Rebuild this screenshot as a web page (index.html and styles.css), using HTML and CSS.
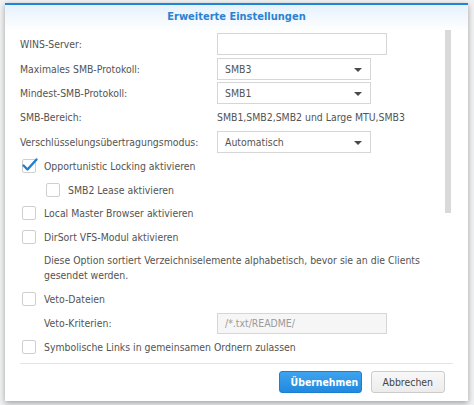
FILE: index.html
```html
<!DOCTYPE html>
<html lang="de">
<head>
<meta charset="utf-8">
<title>Erweiterte Einstellungen</title>
<link rel="stylesheet" href="styles.css">
</head>
<body>
<div class="page">
  <div class="dialog">
    <div class="header">Erweiterte Einstellungen</div>
    <div class="body">
      <div class="row first">
        <span class="label">WINS-Server:</span>
        <span class="input"></span>
      </div>
      <div class="row">
        <span class="label">Maximales SMB-Protokoll:</span>
        <span class="select">SMB3<i class="arrow"></i></span>
      </div>
      <div class="row">
        <span class="label">Mindest-SMB-Protokoll:</span>
        <span class="select">SMB1<i class="arrow"></i></span>
      </div>
      <div class="row">
        <span class="label">SMB-Bereich:</span>
        <span class="value">SMB1,SMB2,SMB2 und Large MTU,SMB3</span>
      </div>
      <div class="row shift">
        <span class="label">Verschlüsselungsübertragungsmodus:</span>
        <span class="select">Automatisch<i class="arrow"></i></span>
      </div>
      <div class="row check">
        <span class="box checked"><svg width="18" height="16" viewBox="0 0 18 16"><path d="M2.5 8.5 L6.5 12.5 L15.5 2.5" fill="none" stroke="#1f7fd2" stroke-width="2.4" stroke-linecap="round" stroke-linejoin="round"/></svg></span>
        <span>Opportunistic Locking aktivieren</span>
      </div>
      <div class="row check sub tight">
        <span class="box"></span>
        <span>SMB2 Lease aktivieren</span>
      </div>
      <div class="row check">
        <span class="box"></span>
        <span>Local Master Browser aktivieren</span>
      </div>
      <div class="row check tight">
        <span class="box"></span>
        <span>DirSort VFS-Modul aktivieren</span>
      </div>
      <p class="desc">Diese Option sortiert Verzeichniselemente alphabetisch, bevor sie an die Clients gesendet werden.</p>
      <div class="row check">
        <span class="box"></span>
        <span>Veto-Dateien</span>
      </div>
      <div class="row indent">
        <span class="label">Veto-Kriterien:</span>
        <span class="input disabled">/*.txt/README/</span>
      </div>
      <div class="row check">
        <span class="box"></span>
        <span>Symbolische Links in gemeinsamen Ordnern zulassen</span>
      </div>
    </div>
    <div class="footer">
      <button class="btn primary">Übernehmen</button>
      <button class="btn">Abbrechen</button>
    </div>
    <div class="scrollbar"></div>
  </div>
</div>
</body>
</html>
```
FILE: styles.css
```css
html, body {
  margin: 0;
  padding: 0;
}
body {
  background: #f1f2f3;
  font-family: "DejaVu Sans Condensed", "DejaVu Sans", sans-serif;
  font-size: 10.4px;
  color: #535353;
  width: 474px;
  height: 405px;
  overflow: hidden;
}
.page {
  padding: 3px 6px 0 5px;
}
.dialog {
  position: relative;
  width: 463px;
  height: 396px;
  background: #fff;
  border-top: 2px solid #1f84d8;
  box-shadow: 0 2px 6px rgba(0,0,0,0.35);
  display: flex;
  flex-direction: column;
}
.header {
  height: 26px;
  line-height: 24px;
  text-align: center;
  font-weight: bold;
  font-size: 11px;
  color: #2a82d2;
  background: linear-gradient(#e6f2fc, #ffffff);
}
.body {
  padding: 0 0 0 15px;
  flex: 1;
}
.row {
  display: flex;
  align-items: center;
  height: 24px;
}
.row.tight {
  height: 23px;
}
.row.first {
  height: 25px;
  margin-bottom: 1px;
}
.row.shift {
  margin-top: 1px;
}
.label {
  width: 197px;
  flex: none;
}
.indent .label {
  width: 173px;
  padding-left: 24px;
}
.input {
  box-sizing: border-box;
  width: 170px;
  height: 22px;
  border: 1px solid #d6d6d6;
  background: #fff;
  padding: 0 7px;
  line-height: 20px;
}
.input.disabled {
  background: #f6f6f6;
  color: #9a9a9a;
  height: 21px;
  line-height: 19px;
}
.select {
  box-sizing: border-box;
  position: relative;
  width: 154px;
  height: 22px;
  border: 1px solid #d6d6d6;
  padding: 0 7px;
  line-height: 20px;
  background: #fff;
}
.arrow {
  position: absolute;
  right: 8px;
  top: 9px;
  width: 0;
  height: 0;
  border-left: 4px solid transparent;
  border-right: 4px solid transparent;
  border-top: 4px solid #4a4a4a;
}
.check {
  gap: 8px;
  padding-left: 2px;
}
.check.sub {
  padding-left: 26px;
}
.box {
  box-sizing: border-box;
  width: 14px;
  height: 14px;
  border: 1px solid #cfcfcf;
  border-radius: 2px;
  background: #fff;
  position: relative;
  flex: none;
}
.box.checked svg {
  position: absolute;
  left: -2px;
  top: -3px;
}
.desc {
  margin: 5px 20px 4px 24px;
  line-height: 15px;
}
.footer {
  margin: 0 15px 0 15px;
  border-top: 1px solid #e4e4e4;
  height: 36px;
  display: flex;
  justify-content: flex-end;
  align-items: center;
  gap: 9px;
  padding-right: 8px;
  margin-bottom: 1px;
}
.btn {
  font-family: inherit;
  font-size: 10.4px;
  height: 22px;
  border-radius: 3px;
  border: 1px solid #cbcbcb;
  background: linear-gradient(#f8f8f8, #ececec);
  color: #444;
  padding: 0 11px;
  cursor: pointer;
}
.btn.primary {
  width: 83px;
  border-color: #1c7fd0;
  background: linear-gradient(#3ea3ef, #2189df);
  color: #fff;
  font-weight: bold;
}
.scrollbar {
  position: absolute;
  left: 440px;
  top: 25px;
  width: 6px;
  height: 183px;
  background: #d9d9d9;
}
```
